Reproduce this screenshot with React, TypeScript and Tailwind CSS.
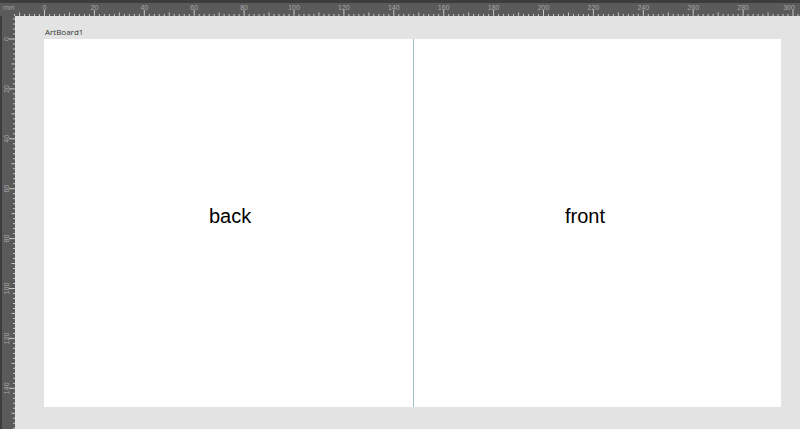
import React from "react";

const PX = 2.495;
const X0 = 44.5;
const Y0 = 39;

function TopRuler() {
  const ticks: React.ReactNode[] = [];
  for (let mm = -12; mm <= 304; mm += 2) {
    const x = X0 + mm * PX;
    const major = mm % 20 === 0;
    const mid = mm % 10 === 0;
    const h = major ? 6 : mid ? 3.5 : 2;
    ticks.push(<line key={"t" + mm} x1={x} x2={x} y1={16 - h} y2={16} stroke="#c9c9c9" strokeWidth={1} />);
    if (major && mm >= 0 && mm <= 300) {
      ticks.push(
        <text
          key={"l" + mm}
          x={mm === 300 ? Math.min(x, 789) : x}
          y={9.5}
          fontSize={7}
          fill="#a8a8a8"
          textAnchor="middle"
          fontFamily="Liberation Sans, Arial, sans-serif"
        >
          {mm}
        </text>
      );
    }
  }
  return (
    <svg width={800} height={16} className="block">
      <rect x={0} y={0} width={800} height={16} fill="#5a5a5a" />
      <rect x={0} y={0} width={800} height={3} fill="#3d3d3d" />
      <text x={3} y={9.5} fontSize={7} fill="#a0a0a0" fontFamily="Liberation Sans, Arial, sans-serif">mm</text>
      {ticks}
    </svg>
  );
}

function LeftRuler() {
  const ticks: React.ReactNode[] = [];
  for (let mm = -8; mm <= 160; mm += 2) {
    const y = Y0 + mm * PX - 16;
    const major = mm % 20 === 0;
    const mid = mm % 10 === 0;
    const w = major ? 6 : mid ? 3.5 : 2;
    ticks.push(<line key={"t" + mm} x1={15 - w} x2={15} y1={y} y2={y} stroke="#c9c9c9" strokeWidth={1} />);
    if (major && mm <= 140) {
      ticks.push(
        <text
          key={"l" + mm}
          x={0}
          y={0}
          fontSize={7}
          fill="#a8a8a8"
          textAnchor="middle"
          fontFamily="Liberation Sans, Arial, sans-serif"
          transform={`translate(8.5 ${y}) rotate(-90)`}
        >
          {mm}
        </text>
      );
    }
  }
  return (
    <svg width={15} height={413} className="block shrink-0">
      <rect x={0} y={0} width={15} height={413} fill="#5a5a5a" />
      <rect x={0} y={0} width={2} height={413} fill="#3d3d3d" />
      {ticks}
    </svg>
  );
}

export default function App() {
  return (
    <div className="w-[800px] h-[429px] overflow-hidden flex flex-col bg-[#e3e3e3]">
      <TopRuler />
      <div className="flex flex-1">
        <LeftRuler />
        <div className="flex-1 flex flex-col pl-[29px] pt-[9px]">
          <div
            className="h-[14px] pl-[1px] text-[8px] leading-[14px] text-[#333]"
            style={{ fontFamily: "'Open Sans', 'Liberation Sans', sans-serif" }}
          >
            ArtBoard1
          </div>
          <div className="relative w-[737px] h-[368px] bg-white">
            <div className="absolute left-[369px] top-0 bottom-0 w-px bg-[#9fbfcc]" />
            <div
              className="absolute left-[165px] top-[165px] text-[20px] leading-[24px] text-black"
              style={{ fontFamily: "'Liberation Sans', Arial, sans-serif" }}
            >
              back
            </div>
            <div
              className="absolute left-[521px] top-[165px] text-[20px] leading-[24px] text-black"
              style={{ fontFamily: "'Liberation Sans', Arial, sans-serif" }}
            >
              front
            </div>
          </div>
        </div>
      </div>
    </div>
  );
}
